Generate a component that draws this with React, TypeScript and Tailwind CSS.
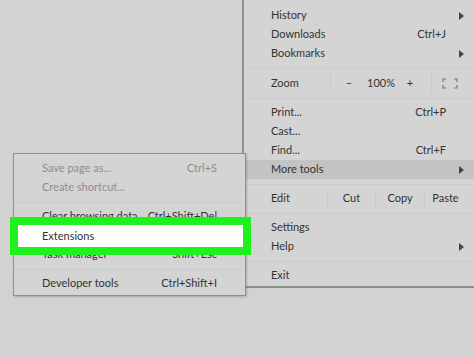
import React from 'react';

const font = "font-['Lato','Noto_Sans',sans-serif]";

const Arrow: React.FC = () => (
  <svg width="5" height="8" viewBox="0 0 5 8" className="ml-[13px]">
    <path d="M0 0 L5 4 L0 8 Z" fill="#444" />
  </svg>
);

type RowProps = { label: string; shortcut?: string; arrow?: boolean; active?: boolean };

const MainRow: React.FC<RowProps> = ({ label, shortcut, arrow, active }) => (
  <div className={`flex items-center h-[19px] whitespace-nowrap ${active ? 'bg-[#c3c3c3]' : ''}`}>
    <span className="pl-[27px] flex-1">{label}</span>
    <span className="text-right">{shortcut}</span>
    <span className="w-[28px] flex items-center">{arrow && <Arrow />}</span>
  </div>
);

const Sep: React.FC = () => (
  <div className="h-[10px] flex items-center">
    <div className="h-px w-full bg-[#cbcbcb]" />
  </div>
);

const SubRow: React.FC<{ label: string; shortcut?: string; disabled?: boolean }> = ({ label, shortcut, disabled }) => (
  <div className={`flex items-center justify-between h-[19px] pl-[28px] pr-[28px] whitespace-nowrap ${disabled ? 'text-[#8c8c8c]' : ''}`}>
    <span>{label}</span>
    <span>{shortcut}</span>
  </div>
);

const App: React.FC = () => {
  return (
    <div className={`relative w-[474px] h-[358px] bg-[#d2d2d2] overflow-hidden text-[11px] text-[#333] ${font}`}>
      {/* main menu */}
      <div className="absolute left-[242px] top-0 right-0 h-[288px] bg-[#d4d4d4] border-l-2 border-b-2 border-[#8f8f8f] pt-[6px]">
        <MainRow label="History" arrow />
        <MainRow label="Downloads" shortcut="Ctrl+J" />
        <MainRow label="Bookmarks" arrow />
        <Sep />
        <div className="flex items-center h-[20px]">
          <span className="pl-[27px] w-[86px]">Zoom</span>
          <div className="flex items-center h-full w-[102px] border-l border-r border-[#cacaca]">
            <span className="w-[36px] text-center">–</span>
            <span className="w-[28px] text-center">100%</span>
            <span className="w-[30px] text-center">+</span>
          </div>
          <div className="flex-1 flex items-center pl-[10px]">
            <svg width="16" height="11" viewBox="0 0 16 11" fill="none" stroke="#777" strokeWidth="1.2">
              <path d="M1 4 V1 H4 M12 1 H15 V4 M15 7 V10 H12 M4 10 H1 V7" />
            </svg>
          </div>
        </div>
        <Sep />
        <MainRow label="Print..." shortcut="Ctrl+P" />
        <MainRow label="Cast..." />
        <MainRow label="Find..." shortcut="Ctrl+F" />
        <MainRow label="More tools" arrow active />
        <Sep />
        <div className="flex items-center h-[19px]">
          <span className="pl-[27px] w-[83px]">Edit</span>
          <div className="flex items-center h-[19px] border-l border-[#cacaca] w-[48px] justify-center">Cut</div>
          <div className="flex items-center h-[19px] border-l border-[#cacaca] w-[49px] justify-center">Copy</div>
          <div className="flex items-center h-[19px] border-l border-[#cacaca] w-[42px] justify-center">Paste</div>
        </div>
        <Sep />
        <MainRow label="Settings" />
        <MainRow label="Help" arrow />
        <Sep />
        <MainRow label="Exit" />
      </div>

      {/* submenu */}
      <div className="absolute left-[13px] top-[153px] w-[233px] h-[143px] bg-[#d4d4d4] border border-[#8f8f8f] shadow-[1px_1px_2px_rgba(0,0,0,0.2)] pt-[5px]">
        <SubRow label="Save page as..." shortcut="Ctrl+S" disabled />
        <SubRow label="Create shortcut..." disabled />
        <Sep />
        <SubRow label="Clear browsing data" shortcut="Ctrl+Shift+Del" />
        <div className="h-[19px]" />
        <SubRow label="Task manager" shortcut="Shift+Esc" />
        <Sep />
        <SubRow label="Developer tools" shortcut="Ctrl+Shift+I" />
      </div>

      {/* highlight */}
      <div className="absolute left-[10px] top-[217px] w-[241px] h-[38px] border-[8px] border-[#1ef21e]">
        <div className="bg-white h-full flex items-center pl-[24px]">Extensions</div>
      </div>
    </div>
  );
};

export default App;
